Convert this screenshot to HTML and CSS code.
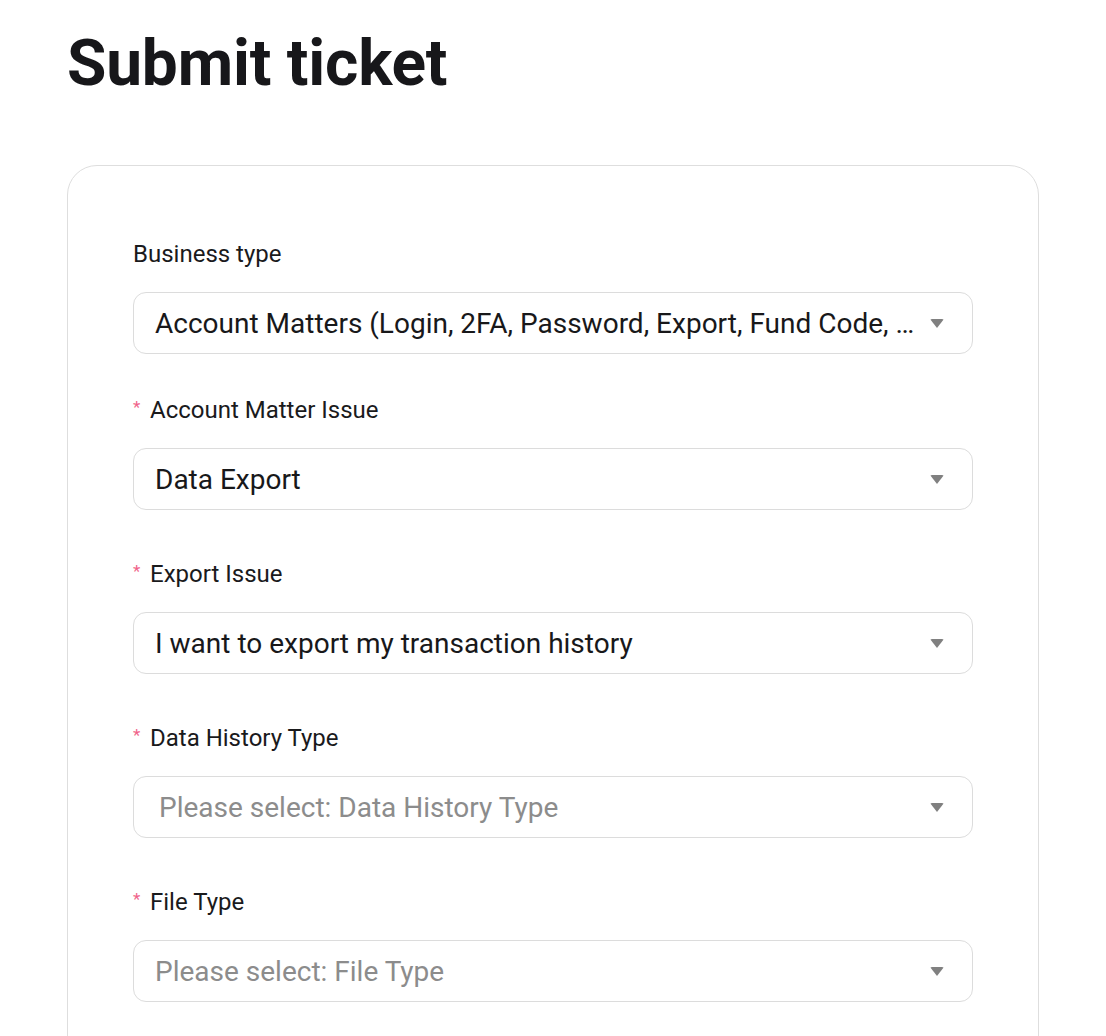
FILE: index.html
```html
<!DOCTYPE html>
<html lang="en">
<head>
<meta charset="utf-8">
<title>Submit ticket</title>
<link rel="stylesheet" href="styles.css">
</head>
<body>
<main class="page">
  <h1 class="title">Submit ticket</h1>
  <form class="card">
    <div class="field field-first">
      <div class="label">Business type</div>
      <div class="select">
        <span class="value">Account Matters (Login, 2FA, Password, Export, Fund Code, …</span>
        <span class="arrow"></span>
      </div>
    </div>
    <div class="field field-second">
      <div class="label"><span class="req">*</span>Account Matter Issue</div>
      <div class="select">
        <span class="value">Data Export</span>
        <span class="arrow"></span>
      </div>
    </div>
    <div class="field">
      <div class="label"><span class="req">*</span>Export Issue</div>
      <div class="select">
        <span class="value">I want to export my transaction history</span>
        <span class="arrow"></span>
      </div>
    </div>
    <div class="field">
      <div class="label"><span class="req">*</span>Data History Type</div>
      <div class="select">
        <span class="value placeholder indent">Please select: Data History Type</span>
        <span class="arrow"></span>
      </div>
    </div>
    <div class="field">
      <div class="label"><span class="req">*</span>File Type</div>
      <div class="select">
        <span class="value placeholder">Please select: File Type</span>
        <span class="arrow"></span>
      </div>
    </div>
  </form>
</main>
</body>
</html>
```

FILE: styles.css
```css
html, body {
  margin: 0;
  padding: 0;
  background: #ffffff;
}

body {
  font-family: Roboto, "Liberation Sans", Arial, sans-serif;
  color: #1a1a1c;
}

.page {
  padding: 28px 67px 0 67px;
}

.title {
  margin: 0;
  font-size: 64px;
  line-height: 72px;
  font-weight: 700;
  color: #17171a;
  letter-spacing: -0.2px;
}

.card {
  margin-top: 65px;
  border: 1.5px solid #dedede;
  border-radius: 30px;
  padding: 72px 65px 80px 65px;
  display: flex;
  flex-direction: column;
}

.field {
  display: flex;
  flex-direction: column;
  margin-top: 48px;
}

.field-first {
  margin-top: 0;
}

.field-second {
  margin-top: 40px;
}

.label {
  font-size: 24px;
  line-height: 32px;
  color: #1a1a1c;
  margin-bottom: 22px;
  display: flex;
  align-items: center;
}

.req {
  color: #f0638a;
  font-size: 17px;
  width: 17px;
  align-self: flex-start;
  line-height: 26px;
}

.select {
  height: 62px;
  box-sizing: border-box;
  border: 1.5px solid #dcdcdc;
  border-radius: 13px;
  display: flex;
  align-items: center;
  padding: 0 28px 0 21px;
  gap: 16px;
}

.value {
  flex: 1;
  font-size: 28px;
  color: #18181a;
  white-space: nowrap;
  overflow: hidden;
}

.placeholder {
  color: #8c8c8c;
}

.indent {
  padding-left: 4px;
}

.arrow {
  width: 0;
  height: 0;
  border-left: 7px solid transparent;
  border-right: 7px solid transparent;
  border-top: 9px solid #808080;
  border-radius: 2px;
}
```
